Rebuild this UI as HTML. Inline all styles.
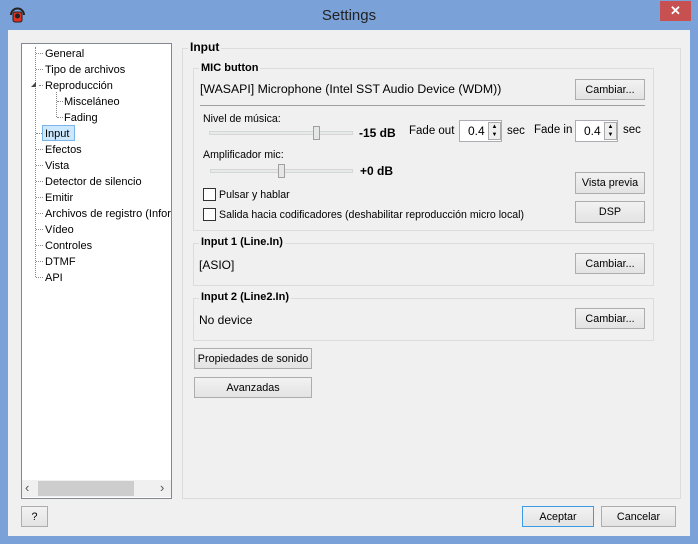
<!DOCTYPE html><html><head><style>
*{margin:0;padding:0;box-sizing:border-box}
body{width:698px;height:544px;background:#7aa1d8;font-family:"Liberation Sans",sans-serif;font-size:10.6px;color:#000;position:relative;overflow:hidden}
.a{position:absolute;white-space:nowrap}
.client{position:absolute;left:8px;top:30px;width:682px;height:506px;background:#f0f0f0}
.btn{position:absolute;background:linear-gradient(#f2f2f2,#e3e3e3);border:1px solid #adadad;display:flex;align-items:center;justify-content:center;font-size:10.8px}
.grp{position:absolute;border:1px solid #dcdcdc}
.gt{position:absolute;background:#f0f0f0;font-weight:bold;padding:0 2px;font-size:11px}
.dh{position:absolute;height:1px;border-top:1px dotted #888}
.dv{position:absolute;width:1px;border-left:1px dotted #888}
.trk{position:absolute;height:4px;background:#e7eaea;border:1px solid #d6d6d6}
.th{position:absolute;width:7px;height:14px;background:#e6e6e6;border:1px solid #a0a0a0}
.spin{position:absolute;width:43px;height:22px;background:#fff;border:1px solid #abadb3}
.cb{position:absolute;width:13px;height:13px;border:1px solid #333;background:#fff}
</style></head><body>
<div class="a" style="left:9px;top:6px;width:17px;height:17px;">
<svg width="17" height="17"><path d="M2 9a6.5 6.5 0 0 1 13 0" fill="none" stroke="#222" stroke-width="2"/><rect x="4" y="6" width="9" height="10" rx="2" fill="#e03020" stroke="#222"/><circle cx="8.5" cy="10" r="2.5" fill="#222"/></svg></div>
<div class="a" style="left:0;width:698px;top:7px;text-align:center;font-size:15px;color:#222">Settings</div>
<div class="a" style="left:660px;top:1px;width:31px;height:20px;background:#c75050;color:#fff;text-align:center;font-size:13px;font-weight:bold;line-height:19px">✕</div>
<div class="client"></div>
<!-- tree -->
<div class="a" style="left:21px;top:43px;width:151px;height:456px;background:#fff;border:1px solid #828790"></div>
<div class="dv" style="left:35px;top:47px;height:230px"></div>
<div class="dv" style="left:56px;top:92px;height:25px"></div>
<div class="dh" style="left:36px;top:53px;width:7px"></div>
<div class="dh" style="left:36px;top:69px;width:7px"></div>
<div class="dh" style="left:39px;top:85px;width:4px"></div>
<div class="dh" style="left:57px;top:101px;width:6px"></div>
<div class="dh" style="left:57px;top:117px;width:6px"></div>
<div class="a" style="left:31px;top:82px;width:0;height:0;border-left:5px solid transparent;border-bottom:5px solid #444"></div>
<div class="dh" style="left:36px;top:133px;width:6px"></div>
<div class="dh" style="left:36px;top:149px;width:7px"></div>
<div class="dh" style="left:36px;top:165px;width:7px"></div>
<div class="dh" style="left:36px;top:181px;width:7px"></div>
<div class="dh" style="left:36px;top:197px;width:7px"></div>
<div class="dh" style="left:36px;top:213px;width:7px"></div>
<div class="dh" style="left:36px;top:229px;width:7px"></div>
<div class="dh" style="left:36px;top:245px;width:7px"></div>
<div class="dh" style="left:36px;top:261px;width:7px"></div>
<div class="dh" style="left:36px;top:277px;width:7px"></div>
<div class="a" style="left:42px;top:125px;width:33px;height:16px;background:#cce8ff;border:1px solid #7ab4e8"></div>
<div class="a" style="left:45px;top:46px;line-height:16px;font-size:11px">General<br>Tipo de archivos<br>Reproducción<br><span style="margin-left:19px">Misceláneo</span><br><span style="margin-left:19px">Fading</span><br>Input<br>Efectos<br>Vista<br>Detector de silencio<br>Emitir<br>Archivos de registro (Infor<br>Vídeo<br>Controles<br>DTMF<br>API</div>
<div class="a" style="left:22px;top:480px;width:149px;height:17px;background:#f0f0f0"></div>
<div class="a" style="left:38px;top:481px;width:96px;height:15px;background:#cdcdcd"></div>
<div class="a" style="left:25px;top:480px;color:#555;font-size:13px;line-height:16px">&lsaquo;</div>
<div class="a" style="left:160px;top:480px;color:#555;font-size:13px;line-height:16px">&rsaquo;</div>
<!-- right -->
<div class="grp" style="left:182px;top:48px;width:499px;height:451px"></div>
<div class="gt" style="left:188px;top:40px;font-size:12px">Input</div>
<div class="grp" style="left:193px;top:68px;width:461px;height:163px"></div>
<div class="gt" style="left:199px;top:62px">MIC button</div>
<div class="a" style="left:200px;top:82px;font-size:12.3px">[WASAPI] Microphone (Intel SST Audio Device (WDM))</div>
<div class="btn" style="left:575px;top:79px;width:70px;height:21px">Cambiar...</div>
<div class="a" style="left:200px;top:105px;width:445px;height:1px;background:#a0a0a0"></div>
<div class="a" style="left:203px;top:113px">Nivel de música:</div>
<div class="trk" style="left:209px;top:131px;width:144px"></div>
<div class="th" style="left:313px;top:126px"></div>
<div class="a" style="left:359px;top:126px;font-weight:bold;font-size:12px">-15 dB</div>
<div class="a" style="left:409px;top:125px;font-size:11.5px">Fade out</div>
<div class="spin" style="left:459px;top:120px"><span class="a" style="left:8px;top:3px;font-size:12px">0.4</span><span class="a" style="left:28px;top:1px;width:13px;height:18px;border:1px solid #aaa;background:#eee;font-size:6px;line-height:8px;text-align:center">▲<br>▼</span></div>
<div class="a" style="left:507px;top:125px;font-size:11.5px">sec</div>
<div class="a" style="left:534px;top:124px;font-size:11.5px">Fade in</div>
<div class="spin" style="left:575px;top:120px"><span class="a" style="left:8px;top:3px;font-size:12px">0.4</span><span class="a" style="left:28px;top:1px;width:13px;height:18px;border:1px solid #aaa;background:#eee;font-size:6px;line-height:8px;text-align:center">▲<br>▼</span></div>
<div class="a" style="left:623px;top:124px;font-size:11.5px">sec</div>
<div class="a" style="left:203px;top:149px">Amplificador mic:</div>
<div class="trk" style="left:210px;top:169px;width:143px"></div>
<div class="th" style="left:278px;top:164px"></div>
<div class="a" style="left:360px;top:164px;font-weight:bold;font-size:12px">+0 dB</div>
<div class="btn" style="left:575px;top:172px;width:70px;height:22px">Vista previa</div>
<div class="btn" style="left:575px;top:201px;width:70px;height:22px">DSP</div>
<div class="cb" style="left:203px;top:188px"></div>
<div class="a" style="left:219px;top:189px">Pulsar y hablar</div>
<div class="cb" style="left:203px;top:208px"></div>
<div class="a" style="left:219px;top:209px">Salida hacia codificadores (deshabilitar reproducción micro local)</div>
<div class="grp" style="left:193px;top:243px;width:461px;height:43px"></div>
<div class="gt" style="left:199px;top:236px">Input 1 (Line.In)</div>
<div class="a" style="left:199px;top:258px;font-size:12px">[ASIO]</div>
<div class="btn" style="left:575px;top:253px;width:70px;height:21px">Cambiar...</div>
<div class="grp" style="left:193px;top:298px;width:461px;height:43px"></div>
<div class="gt" style="left:199px;top:291px">Input 2 (Line2.In)</div>
<div class="a" style="left:199px;top:313px;font-size:12px">No device</div>
<div class="btn" style="left:575px;top:308px;width:70px;height:21px">Cambiar...</div>
<div class="btn" style="left:194px;top:348px;width:118px;height:21px">Propiedades de sonido</div>
<div class="btn" style="left:194px;top:377px;width:118px;height:21px">Avanzadas</div>
<div class="btn" style="left:21px;top:506px;width:27px;height:21px">?</div>
<div class="btn" style="left:522px;top:506px;width:72px;height:21px;border-color:#3c9be6">Aceptar</div>
<div class="btn" style="left:601px;top:506px;width:75px;height:21px">Cancelar</div>
</body></html>
